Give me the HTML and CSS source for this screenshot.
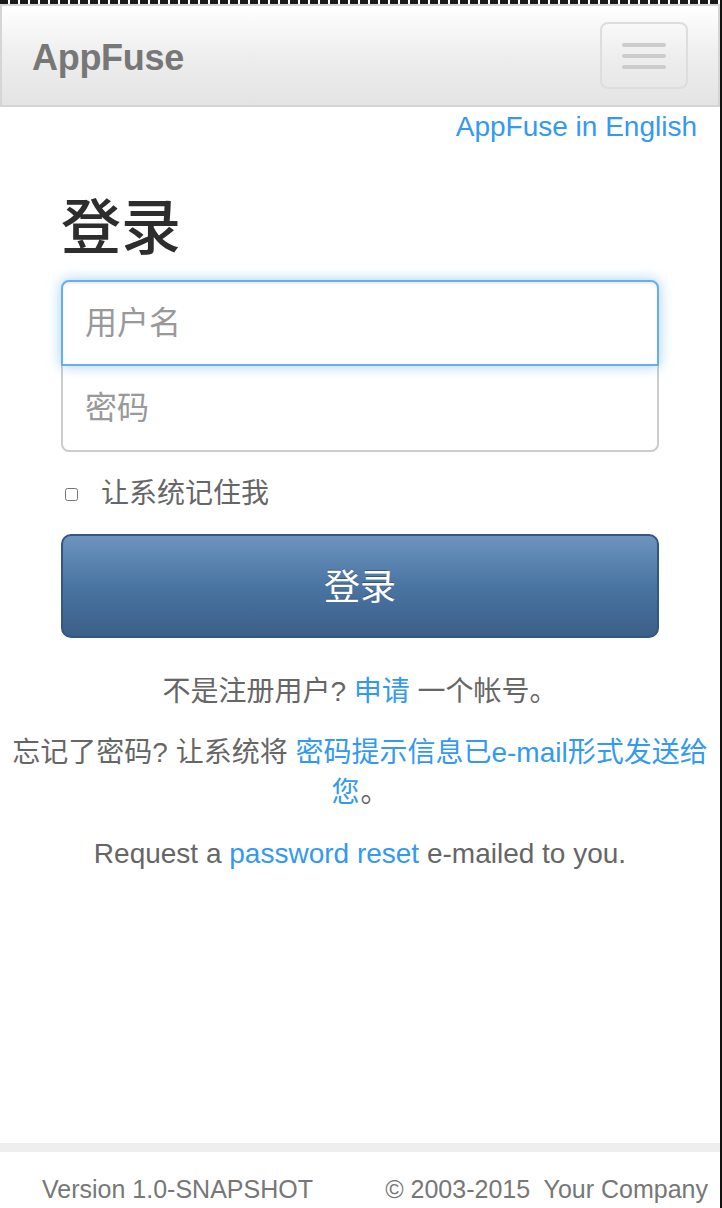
FILE: index.html
```html
<!DOCTYPE html>
<html lang="zh-CN">
<head>
<meta charset="utf-8">
<title>登录 | AppFuse</title>
<link rel="stylesheet" href="styles.css">
</head>
<body>
<div class="page">
  <div class="strip"></div>
  <nav class="navbar">
    <a class="brand" href="#">AppFuse</a>
    <button class="toggle" type="button" aria-label="Toggle navigation">
      <span class="bar"></span><span class="bar"></span><span class="bar"></span>
    </button>
  </nav>
  <main class="main">
    <div class="lang"><a href="#">AppFuse in English</a></div>
    <form class="signin">
      <h2 class="title">登录</h2>
      <input class="field field-top" type="text" placeholder="用户名">
      <input class="field field-bottom" type="password" placeholder="密码">
      <label class="remember"><input type="checkbox" class="check"><span>让系统记住我</span></label>
      <button class="btn" type="button">登录</button>
    </form>
    <p class="note">不是注册用户? <a href="#">申请</a> 一个帐号。</p>
    <p class="note">忘记了密码? 让系统将 <a href="#">密码提示信息已e-mail形式发送给</a><a href="#">您</a><span class="stop">。</span></p>
    <p class="note">Request a <a href="#">password reset</a> e-mailed to you.</p>
  </main>
  <footer class="footer">
    <span>Version 1.0-SNAPSHOT</span>
    <span>©&nbsp;2003-2015&nbsp; Your Company</span>
  </footer>
</div>
</body>
</html>
```

FILE: styles.css
```css
html, body {
  margin: 0;
  padding: 0;
  background: #fff;
}
body {
  font-family: "Liberation Sans", "Noto Sans CJK SC", sans-serif;
  font-size: 28px;
  line-height: 40px;
  color: #666;
}
a {
  color: #3399f3;
  text-decoration: none;
}
.page {
  width: 722px;
  min-height: 1208px;
  box-sizing: border-box;
  border-right: 2px solid #111;
  display: flex;
  flex-direction: column;
}
.strip {
  height: 4px;
  background: repeating-linear-gradient(90deg, #1a1a1a 0 8px, #fff 8px 10px);
}
.navbar {
  height: 103px;
  box-sizing: border-box;
  border: 2px solid #d5d5d5;
  background: linear-gradient(#fff, #eee 50%, #e4e4e4);
  display: flex;
  align-items: center;
  justify-content: space-between;
  padding: 0 30px 0 30px;
}
.brand {
  color: #777;
  font-weight: bold;
  font-size: 36px;
  line-height: 40px;
  padding-top: 4px;
  letter-spacing: -0.3px;
}
.toggle {
  width: 88px;
  height: 67px;
  box-sizing: border-box;
  border: 2px solid #ddd;
  border-radius: 8px;
  background: transparent;
  display: flex;
  flex-direction: column;
  align-items: center;
  justify-content: center;
  gap: 7px;
  padding: 0;
}
.bar {
  display: block;
  width: 44px;
  height: 4px;
  border-radius: 2px;
  background: #ccc;
}
.main {
  flex: 1;
}
.lang {
  text-align: right;
  padding-right: 23px;
  line-height: 40px;
}
.signin {
  width: 598px;
  margin: 0 auto;
}
.title {
  margin: 49px 0 18px;
  font-size: 60px;
  line-height: 66px;
  font-weight: 500;
  color: #2d2d2d;
}
.field {
  display: block;
  width: 100%;
  box-sizing: border-box;
  height: 86px;
  margin: 0;
  padding: 0 22px;
  font-family: inherit;
  font-size: 32px;
  color: #555;
  background: #fff;
  border: 2px solid #ccc;
  outline: none;
}
.field::placeholder {
  color: #999;
}
.field-top {
  border-radius: 8px 8px 0 0;
  border-color: #66afe9;
  box-shadow: inset 0 2px 2px rgba(0,0,0,.075), 0 0 14px rgba(102,175,233,.6);
  position: relative;
  z-index: 1;
}
.field-bottom {
  margin-top: -1px;
  border-radius: 0 0 8px 8px;
  border-top-color: transparent;
  height: 87px;
}
.remember {
  display: flex;
  align-items: center;
  margin-top: 22px;
  line-height: 40px;
  color: #666;
}
.check {
  width: 13px;
  height: 13px;
  margin: 0 23px 0 4px;
}
.btn {
  display: block;
  width: 100%;
  margin-top: 20px;
  height: 104px;
  box-sizing: border-box;
  border: 2px solid #34577e;
  border-radius: 10px;
  background: linear-gradient(#6d94bf, #4a74a2 50%, #3c6089);
  color: #fff;
  font-family: inherit;
  font-size: 36px;
  line-height: 48px;
  padding: 4px 0 0;
  text-shadow: 0 -1px 0 rgba(0,0,0,.3);
}
.note {
  margin: 0 0 21px;
  text-align: center;
  padding: 0 10px;
}
.stop {
  margin-left: 1px;
}
.signin + .note {
  margin-top: 34px;
}
.footer {
  height: 65px;
  box-sizing: border-box;
  border-top: 9px solid #eee;
  display: flex;
  justify-content: space-between;
  padding: 22px 12px 0 42px;
  font-size: 25px;
  line-height: 30px;
  color: #777;
}
```
